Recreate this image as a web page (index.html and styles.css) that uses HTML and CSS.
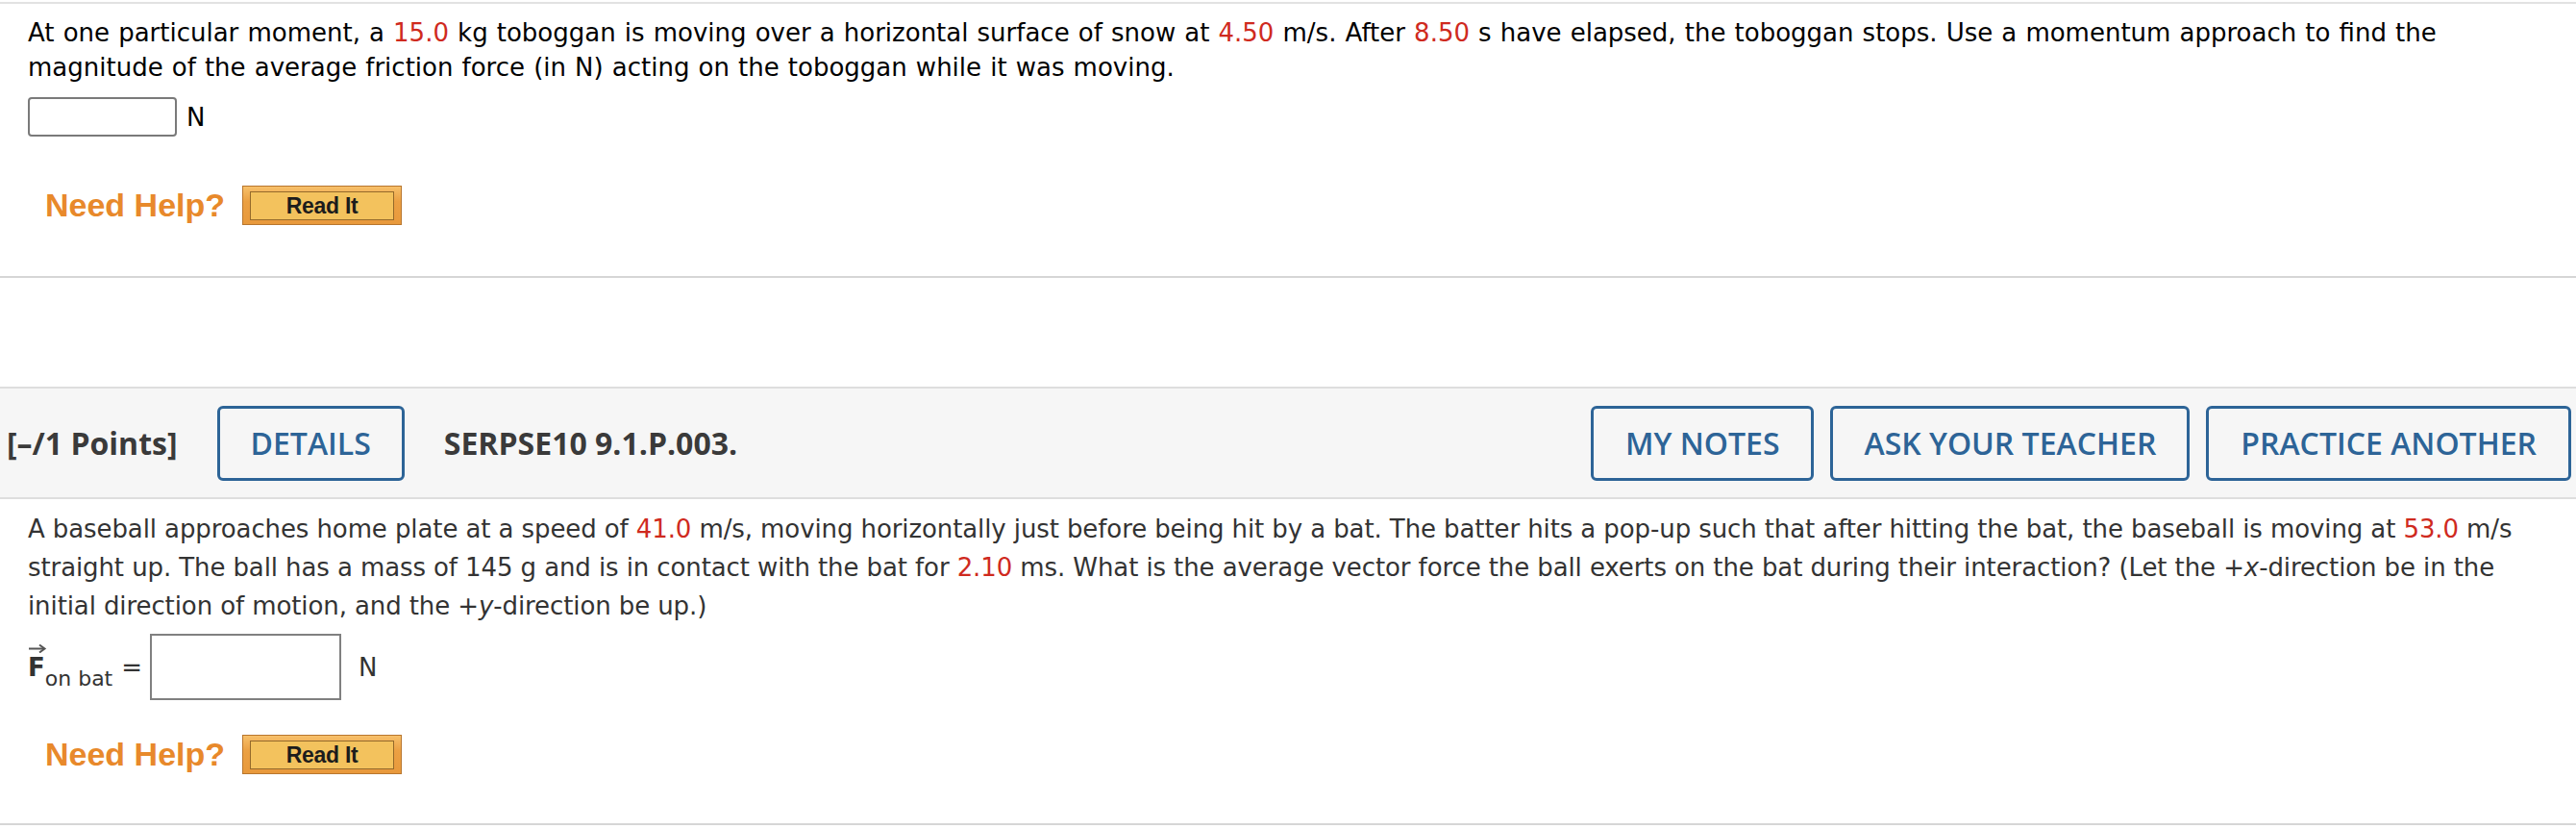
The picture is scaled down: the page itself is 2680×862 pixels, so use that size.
FILE: index.html
```html
<!DOCTYPE html>
<html>
<head>
<meta charset="utf-8">
<title>Questions</title>
<link rel="stylesheet" href="styles.css">
</head>
<body>
<div class="page">
  <section class="q q1">
    <p class="stem">At one particular moment, a <span class="num">15.0</span> kg toboggan is moving over a horizontal surface of snow at <span class="num">4.50</span> m/s. After <span class="num">8.50</span> s have elapsed, the toboggan stops. Use a momentum approach to find the magnitude of the average friction force (in N) acting on the toboggan while it was moving.</p>
    <div class="answer-row">
      <span class="box box-small"></span><span class="unit">N</span>
    </div>
    <div class="help">
      <span class="need">Need Help?</span>
      <span class="readit"><span class="readit-inner">Read It</span></span>
    </div>
  </section>

  <header class="qhead">
    <span class="points">[–/1 Points]</span>
    <span class="btn">DETAILS</span>
    <span class="qid">SERPSE10 9.1.P.003.</span>
    <div class="actions">
      <span class="btn">MY NOTES</span>
      <span class="btn">ASK YOUR TEACHER</span>
      <span class="btn">PRACTICE ANOTHER</span>
    </div>
  </header>

  <section class="q q2">
    <p class="stem">A baseball approaches home plate at a speed of <span class="num">41.0</span> m/s, moving horizontally just before being hit by a bat. The batter hits a pop-up such that after hitting the bat, the baseball is moving at <span class="num">53.0</span> m/s straight up. The ball has a mass of 145 g and is in contact with the bat for <span class="num">2.10</span> ms. What is the average vector force the ball exerts on the bat during their interaction? (Let the +<i>x</i>-direction be in the initial direction of motion, and the +<i>y</i>-direction be up.)</p>
    <div class="answer-row vec-row">
      <span class="vec"><span class="vf">F<svg class="arrow" width="20" height="10" viewBox="0 0 20 10"><path d="M1 5.5 H17" stroke="#555" stroke-width="2" fill="none"/><path d="M12 1.5 L17.5 5.5 L12 9.5" stroke="#555" stroke-width="2" fill="none"/></svg></span><span class="sub">on bat</span></span>
      <span class="eq">=</span>
      <span class="box box-large"></span><span class="unit unit-wide">N</span>
    </div>
    <div class="help help2">
      <span class="need">Need Help?</span>
      <span class="readit"><span class="readit-inner">Read It</span></span>
    </div>
  </section>
</div>
</body>
</html>
```
FILE: styles.css
```css
html, body {
  margin: 0;
  padding: 0;
  background: #ffffff;
}

.page {
  width: 2680px;
  padding-top: 2px;
}

.q {
  padding: 0 29px;
  font-family: "DejaVu Sans", Verdana, sans-serif;
  font-size: 26px;
}

.q1 {
  border-top: 2px solid #e2e2e2;
  border-bottom: 2px solid #d6d6d6;
  padding-top: 12px;
  padding-bottom: 53px;
  color: #000000;
}

.stem {
  margin: 0;
  line-height: 36px;
}

.q1 .stem {
  word-spacing: 0.85px;
}

.q2 .stem {
  line-height: 40px;
  letter-spacing: -0.1px;
}

.num {
  color: #cf2a1e;
}

.answer-row {
  display: flex;
  align-items: center;
  margin-top: 13px;
}

.box {
  display: block;
  box-sizing: border-box;
  background: #ffffff;
}

.box-small {
  width: 155px;
  height: 41px;
  border: 2px solid #7a7a7a;
  border-radius: 4px;
}

.box-large {
  width: 199px;
  height: 69px;
  border: 2px solid #808080;
  margin-left: 8px;
}

.unit {
  margin-left: 10px;
  line-height: 30px;
}

.unit-wide {
  margin-left: 18px;
}

.help {
  display: flex;
  align-items: center;
  margin-top: 51px;
  padding-left: 18px;
  height: 41px;
}

.help2 {
  margin-top: 36px;
}

.need {
  font-family: "Liberation Sans", Arial, sans-serif;
  font-weight: bold;
  font-size: 34px;
  color: #e8892b;
  line-height: 41px;
}

.readit {
  margin-left: 18px;
  box-sizing: border-box;
  width: 166px;
  height: 41px;
  border: 1px solid #b8762e;
  background: linear-gradient(#f7c06a, #eba043 40%, #e8993c);
  padding: 5px 7px 4px 7px;
  display: flex;
}

.readit-inner {
  flex: 1;
  display: flex;
  align-items: center;
  justify-content: center;
  border: 1px solid #94692a;
  background: #f3c25d;
  font-family: "Liberation Sans", Arial, sans-serif;
  font-weight: bold;
  font-size: 23px;
  color: #1c1c1c;
  letter-spacing: -0.3px;
}

.qhead {
  margin-top: 113px;
  box-sizing: border-box;
  height: 117px;
  border-top: 2px solid #dedede;
  border-bottom: 2px solid #dedede;
  background: #f6f6f6;
  display: flex;
  align-items: center;
  padding: 0 5px 0 7px;
  font-family: "Open Sans", sans-serif;
  color: #3a3a3a;
}

.points {
  font-weight: bold;
  font-size: 32px;
}

.qid {
  font-weight: bold;
  font-size: 32px;
  margin-left: 41px;
}

.btn {
  box-sizing: border-box;
  height: 78px;
  border: 3px solid #2d6497;
  border-radius: 6px;
  padding: 0 33px;
  display: flex;
  align-items: center;
  font-size: 32px;
  font-weight: 600;
  color: #2d6497;
  white-space: nowrap;
}

.points + .btn {
  margin-left: 41px;
  padding: 0 32px;
}

.actions {
  margin-left: auto;
  display: flex;
  gap: 17px;
}

.actions .btn:first-child {
  padding: 0 33px;
}

.actions .btn:nth-child(2) {
  padding: 0 32px;
}

.q2 {
  padding-top: 11px;
  padding-bottom: 51px;
  border-bottom: 2px solid #d6d6d6;
  color: #333333;
}

.vec-row {
  margin-top: 9px;
}

.vec {
  display: block;
  height: 30px;
  line-height: 30px;
  white-space: nowrap;
}

.vf {
  position: relative;
  font-weight: bold;
}

.arrow {
  position: absolute;
  left: 0;
  top: -10px;
}

.sub {
  font-size: 22px;
  position: relative;
  top: 10px;
}

.eq {
  margin-left: 9px;
  line-height: 30px;
}
```
